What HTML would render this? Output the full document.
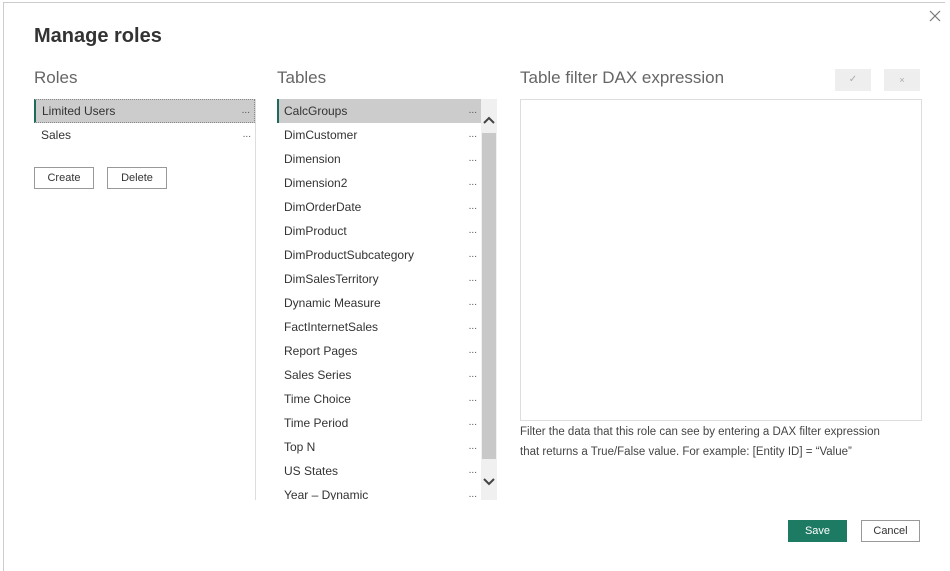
<!DOCTYPE html>
<html><head><style>
body{margin:0;width:950px;height:571px;background:#fff;font-family:"Liberation Sans",sans-serif;position:relative;overflow:hidden;color:#222}
.a{position:absolute}
.h{font-size:17px;color:#666;font-weight:300}
.row{position:absolute;height:24px;line-height:24px;font-size:12px;color:#333}
.dots{position:absolute;right:4px;top:0;font-size:10px;color:#555}
.btn{position:absolute;border:1px solid #999;background:#fff;font-size:11px;text-align:center;box-sizing:border-box;color:#333}
</style></head><body>
<div class="a" style="left:3px;top:2px;width:942px;height:1px;background:#ccc"></div>
<div class="a" style="left:3px;top:2px;width:1px;height:569px;background:#ccc"></div>
<svg class="a" style="left:929px;top:10px" width="12" height="12"><path d="M1 1L11 11M11 1L1 11" stroke="#777" stroke-width="1.2"/></svg>
<div class="a" style="left:34px;top:25px;font-size:20px;font-weight:bold;color:#333">Manage roles</div>
<div class="a h" style="left:34px;top:68px">Roles</div>
<div class="a h" style="left:277px;top:68px">Tables</div>
<div class="a h" style="left:520px;top:68px">Table filter DAX expression</div>
<div class="a" style="left:835px;top:69px;width:36px;height:22px;background:#eee;color:#aaa;font-size:10px;text-align:center;line-height:22px">✓</div>
<div class="a" style="left:884px;top:69px;width:36px;height:22px;background:#eee;color:#aaa;font-size:9px;text-align:center;line-height:22px">×</div>

<div class="row" style="left:34px;top:99px;width:221px;background:#ccc;border:1px dotted #888;border-left:2px solid #1f6b5a;box-sizing:border-box;padding-left:6px;line-height:22px">Limited Users<span class="dots">...</span></div>
<div class="row" style="left:34px;top:123px;width:221px;padding-left:7px;box-sizing:border-box">Sales<span class="dots">...</span></div>
<div class="btn" style="left:34px;top:167px;width:60px;height:22px;line-height:20px">Create</div>
<div class="btn" style="left:107px;top:167px;width:60px;height:22px;line-height:20px">Delete</div>
<div class="a" style="left:255px;top:99px;width:1px;height:401px;background:#ddd"></div>

<div class="row" style="left:277px;top:99px;width:204px;background:#ccc;border-left:2px solid #1f6b5a;box-sizing:border-box;padding-left:5px">CalcGroups<span class="dots">...</span></div>
<div class="a" style="left:481px;top:99px;width:16px;height:401px;background:#f0f0f0"></div>
<div class="a" style="left:482px;top:133px;width:14px;height:326px;background:#c8c8c8"></div>
<div class="a" style="left:481px;top:111px;width:16px;text-align:center">
<svg width="12" height="8"><path d="M1 7L6 2L11 7" stroke="#444" stroke-width="2" fill="none"/></svg></div>
<div class="a" style="left:481px;top:473px;width:16px;text-align:center">
<svg width="12" height="8"><path d="M1 1L6 6L11 1" stroke="#444" stroke-width="2" fill="none"/></svg></div>
<div class="row" style="left:284px;top:123px;width:197px">DimCustomer<span class="dots">...</span></div>
<div class="row" style="left:284px;top:147px;width:197px">Dimension<span class="dots">...</span></div>
<div class="row" style="left:284px;top:171px;width:197px">Dimension2<span class="dots">...</span></div>
<div class="row" style="left:284px;top:195px;width:197px">DimOrderDate<span class="dots">...</span></div>
<div class="row" style="left:284px;top:219px;width:197px">DimProduct<span class="dots">...</span></div>
<div class="row" style="left:284px;top:243px;width:197px">DimProductSubcategory<span class="dots">...</span></div>
<div class="row" style="left:284px;top:267px;width:197px">DimSalesTerritory<span class="dots">...</span></div>
<div class="row" style="left:284px;top:291px;width:197px">Dynamic Measure<span class="dots">...</span></div>
<div class="row" style="left:284px;top:315px;width:197px">FactInternetSales<span class="dots">...</span></div>
<div class="row" style="left:284px;top:339px;width:197px">Report Pages<span class="dots">...</span></div>
<div class="row" style="left:284px;top:363px;width:197px">Sales Series<span class="dots">...</span></div>
<div class="row" style="left:284px;top:387px;width:197px">Time Choice<span class="dots">...</span></div>
<div class="row" style="left:284px;top:411px;width:197px">Time Period<span class="dots">...</span></div>
<div class="row" style="left:284px;top:435px;width:197px">Top N<span class="dots">...</span></div>
<div class="row" style="left:284px;top:459px;width:197px">US States<span class="dots">...</span></div>
<div class="row" style="left:284px;top:483px;width:197px;height:17px;overflow:hidden">Year – Dynamic<span class="dots">...</span></div>

<div class="a" style="left:520px;top:99px;width:400px;height:320px;border:1px solid #ddd"></div>
<div class="a" style="left:520px;top:422px;font-size:11.5px;color:#444;line-height:20px">Filter the data that this role can see by entering a DAX filter expression<br>that returns a True/False value. For example: [Entity ID] = “Value”</div>
<div class="a" style="left:788px;top:520px;width:59px;height:22px;background:#1d7a63;color:#fff;font-size:11px;text-align:center;line-height:22px">Save</div>
<div class="btn" style="left:861px;top:520px;width:59px;height:22px;line-height:20px">Cancel</div>
</body></html>
